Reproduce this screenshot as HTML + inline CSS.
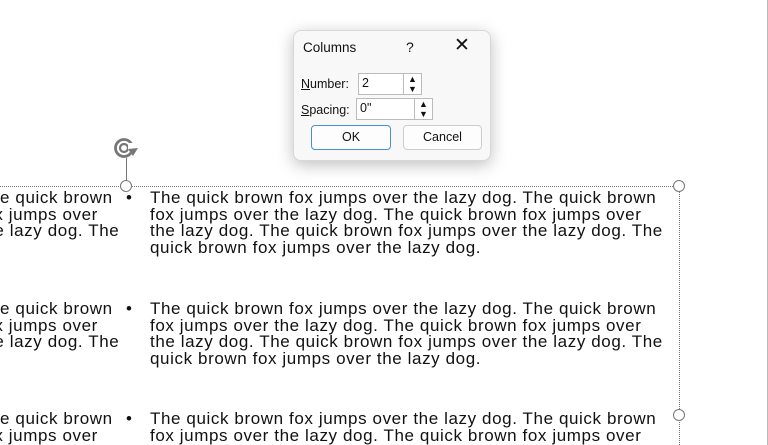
<!DOCTYPE html>
<html><head><style>
body{margin:0;width:768px;height:445px;overflow:hidden;background:#fff;position:relative;font-family:"Liberation Sans",sans-serif}
.t{position:absolute;font-size:17px;letter-spacing:0.6px;line-height:16.5px;color:#111;white-space:nowrap}
.b{position:absolute;left:126px;font-size:17px;color:#111}
.h{position:absolute;width:10px;height:10px;border:1.8px solid #777;border-radius:50%;background:#fff}
.dlg{position:absolute;left:293px;top:30px;width:196px;height:129px;background:#f8f8f8;border:1px solid #d8d8d8;border-radius:8px;box-shadow:0 4px 16px rgba(0,0,0,.25);font-size:12.5px;color:#111}
.dlg div{position:absolute}
.in{background:#fff;border:1px solid #bbb;height:20px;box-sizing:border-box;padding:2px 0 0 3px}
.sp{background:#fff;border:1px solid #bbb;box-sizing:border-box;font-size:9px;line-height:10px;text-align:center}
.btn{height:25px;border:1px solid #ccc;border-radius:4px;background:#fdfdfd;box-sizing:border-box;text-align:center;line-height:23px}
</style></head><body>
<div style="position:absolute;right:0;top:0;width:1px;height:445px;background:#bbb"></div>
<div style="position:absolute;left:0;top:186px;width:679px;border-top:1px dotted #777"></div>
<div style="position:absolute;left:679px;top:186px;height:259px;border-left:1px dotted #777"></div>
<div style="position:absolute;left:126px;top:158px;width:1px;height:24px;background:#777"></div>
<svg style="position:absolute;left:112px;top:136px" width="32" height="26" viewBox="0 0 32 26"><circle cx="12" cy="12" r="8.5" fill="none" stroke="#777" stroke-width="2.8"/><circle cx="12" cy="12" r="4" fill="none" stroke="#777" stroke-width="2.2"/><rect x="16" y="7" width="7" height="7" fill="#fff"/><path d="M16 13 L26 12 L21 20Z" fill="#777"/></svg>
<div class="h" style="left:120px;top:180px"></div>
<div class="h" style="left:673px;top:180px"></div>
<div class="h" style="left:673px;top:409px"></div>

<div class="t" style="left:-21px;top:190px">The quick brown<br>fox jumps over<br>the lazy dog. The</div>
<div class="b" style="top:188px">•</div>
<div class="t" style="left:150px;top:190px">The quick brown fox jumps over the lazy dog. The quick brown<br>fox jumps over the lazy dog. The quick brown fox jumps over<br>the lazy dog. The quick brown fox jumps over the lazy dog. The<br>quick brown fox jumps over the lazy dog.</div>
<div class="t" style="left:-21px;top:301px">The quick brown<br>fox jumps over<br>the lazy dog. The</div>
<div class="b" style="top:299px">•</div>
<div class="t" style="left:150px;top:301px">The quick brown fox jumps over the lazy dog. The quick brown<br>fox jumps over the lazy dog. The quick brown fox jumps over<br>the lazy dog. The quick brown fox jumps over the lazy dog. The<br>quick brown fox jumps over the lazy dog.</div>
<div class="t" style="left:-21px;top:411px">The quick brown<br>fox jumps over</div>
<div class="b" style="top:409px">•</div>
<div class="t" style="left:150px;top:411px">The quick brown fox jumps over the lazy dog. The quick brown<br>fox jumps over the lazy dog. The quick brown fox jumps over</div>

<div class="dlg">
<div style="left:9px;top:9px;font-size:13.5px">Columns</div>
<div style="left:112px;top:8px;font-size:14px">?</div>
<div style="left:160px;top:3px;font-size:19px;font-weight:300">✕</div>
<div style="left:7px;top:46px"><u>N</u>umber:</div>
<div class="in" style="left:64px;top:42px;width:46px;height:22px">2</div>
<div class="sp" style="left:109px;top:42px;width:19px;height:22px">▲<br>▼</div>
<div style="left:7px;top:72px"><u>S</u>pacing:</div>
<div class="in" style="left:62px;top:67px;width:59px;height:22px">0"</div>
<div class="sp" style="left:120px;top:67px;width:19px;height:22px">▲<br>▼</div>
<div class="btn" style="left:17px;top:94px;width:80px;border-color:#4a8fd6">OK</div>
<div class="btn" style="left:109px;top:94px;width:79px">Cancel</div>
</div>
</body></html>
